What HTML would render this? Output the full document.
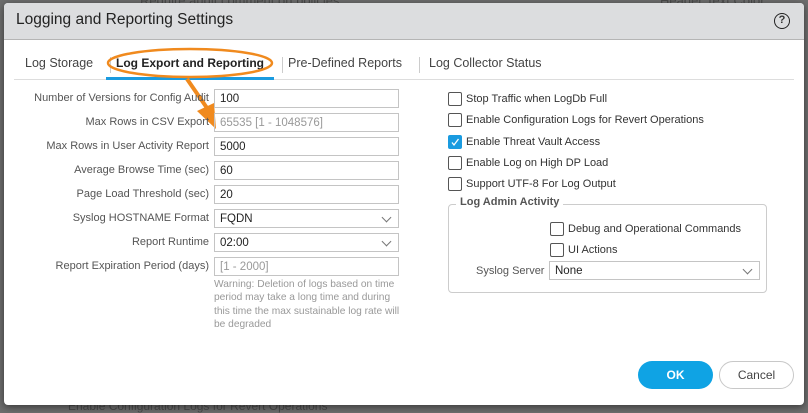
<!DOCTYPE html>
<html><head><style>
*{box-sizing:border-box}
body{margin:0;width:808px;height:412px;overflow:hidden;background:#6e6e6e;font-family:"Liberation Sans",sans-serif;font-size:12px;color:#333;position:relative}
.bgt{position:absolute;color:#333;font-size:13px;opacity:.6}
.dlg{position:absolute;left:4px;top:3px;width:800px;height:402px;background:#fff;border-radius:4px;box-shadow:0 2px 8px rgba(0,0,0,.5);overflow:hidden}
.hdr{height:37px;background:#dcdddf;border-bottom:1px solid #b5b5b5;position:relative}
.hdr .t{position:absolute;left:12px;top:8px;font-size:15.5px;color:#222}
.help{position:absolute;right:14px;top:10px;width:16px;height:16px;border:1.5px solid #222;border-radius:50%;font-size:11px;font-weight:bold;text-align:center;line-height:13px}
.tabs{position:absolute;left:10px;top:40px;right:10px;height:37px;border-bottom:1px solid #ddd}
.tab{position:absolute;top:13px;font-size:12.5px;color:#444}
.sep{position:absolute;top:14px;width:1px;height:16px;background:#ccc}
.lbl{position:absolute;right:595px;font-size:11px;color:#555;text-align:right;white-space:nowrap}
.inp{position:absolute;left:210px;width:185px;height:19px;border:1px solid #c4c4c4;font-size:11.5px;padding:0 5px;line-height:18px;color:#222}
.ph{color:#999}
.chev{position:absolute;right:8px;top:4px;width:7px;height:7px;border-right:1px solid #777;border-bottom:1px solid #777;transform:rotate(45deg)}
.cb{position:absolute;width:14px;height:14px;border:1px solid #555;border-radius:2px;background:#fff}
.cb.on{background:#1a9be0;border-color:#1a9be0}
.ct{position:absolute;font-size:11px;color:#333;white-space:nowrap}
.warn{position:absolute;left:210px;top:275px;width:190px;font-size:10.2px;color:#999;line-height:13.3px}
</style></head><body>
<div class="bgt" style="left:140px;top:-7px">Require audit comment on policies</div>
<div class="bgt" style="left:660px;top:-7px">Header Text Color</div>
<div class="bgt" style="left:68px;top:399px;font-size:12px">Enable Configuration Logs for Revert Operations</div>
<div class="dlg">
 <div class="hdr"><div class="t">Logging and Reporting Settings</div><div class="help">?</div></div>
 <div class="tabs">
  <div class="tab" style="left:11px">Log Storage</div>
  <div class="sep" style="left:96px"></div>
  <div class="tab" style="left:102px;font-weight:bold;color:#222;font-size:12px">Log Export and Reporting</div>
  <div style="position:absolute;left:92px;top:34px;width:168px;height:3px;background:#1a9be0"></div>
  <div class="sep" style="left:268px"></div>
  <div class="tab" style="left:274px">Pre-Defined Reports</div>
  <div class="sep" style="left:405px"></div>
  <div class="tab" style="left:415px">Log Collector Status</div>
 </div>
 <svg style="position:absolute;left:0;top:0" width="800" height="402">
  <ellipse cx="186" cy="60" rx="82" ry="14" fill="none" stroke="#f08a1e" stroke-width="2.5"/>
  <line x1="183" y1="76" x2="203" y2="105" stroke="#f08a1e" stroke-width="4"/>
  <polygon points="193,108 212,126 210,100" fill="#f08a1e"/>
 </svg>
 <div class="lbl" style="top:89px">Number of Versions for Config Audit</div>
 <div class="inp" style="top:86px">100</div>
 <div class="lbl" style="top:113px">Max Rows in CSV Export</div>
 <div class="inp ph" style="top:110px">65535 [1 - 1048576]</div>
 <div class="lbl" style="top:137px">Max Rows in User Activity Report</div>
 <div class="inp" style="top:134px">5000</div>
 <div class="lbl" style="top:161px">Average Browse Time (sec)</div>
 <div class="inp" style="top:158px">60</div>
 <div class="lbl" style="top:185px">Page Load Threshold (sec)</div>
 <div class="inp" style="top:182px">20</div>
 <div class="lbl" style="top:209px">Syslog HOSTNAME Format</div>
 <div class="inp" style="top:206px">FQDN<span class="chev"></span></div>
 <div class="lbl" style="top:233px">Report Runtime</div>
 <div class="inp" style="top:230px">02:00<span class="chev"></span></div>
 <div class="lbl" style="top:257px">Report Expiration Period (days)</div>
 <div class="inp ph" style="top:254px">[1 - 2000]</div>
 <div class="warn">Warning: Deletion of logs based on time period may take a long time and during this time the max sustainable log rate will be degraded</div>

 <div class="cb" style="left:444px;top:89px"></div><div class="ct" style="left:462px;top:90px">Stop Traffic when LogDb Full</div>
 <div class="cb" style="left:444px;top:110px"></div><div class="ct" style="left:462px;top:111px">Enable Configuration Logs for Revert Operations</div>
 <div class="cb on" style="left:444px;top:132px"><svg width="12" height="12" style="position:absolute;left:0;top:0"><path d="M3 6.5 L5 9 L9.5 3" fill="none" stroke="#fff" stroke-width="1.3"/></svg></div><div class="ct" style="left:462px;top:133px">Enable Threat Vault Access</div>
 <div class="cb" style="left:444px;top:153px"></div><div class="ct" style="left:462px;top:154px">Enable Log on High DP Load</div>
 <div class="cb" style="left:444px;top:174px"></div><div class="ct" style="left:462px;top:175px">Support UTF-8 For Log Output</div>
 <div style="position:absolute;left:444px;top:201px;width:319px;height:89px;border:1px solid #ccc;border-radius:4px"></div>
 <div style="position:absolute;left:452px;top:193px;background:#fff;padding:0 4px;font-weight:bold;font-size:11px;color:#555">Log Admin Activity</div>
 <div class="cb" style="left:546px;top:219px"></div><div class="ct" style="left:564px;top:220px">Debug and Operational Commands</div>
 <div class="cb" style="left:546px;top:240px"></div><div class="ct" style="left:564px;top:241px">UI Actions</div>
 <div class="ct" style="left:472px;top:262px;color:#555">Syslog Server</div>
 <div class="inp" style="left:545px;top:258px;width:211px">None<span class="chev"></span></div>

 <div style="position:absolute;left:634px;top:358px;width:75px;height:28px;border-radius:14px;background:#0fa3e4;color:#fff;font-weight:bold;font-size:12px;text-align:center;line-height:28px">OK</div>
 <div style="position:absolute;left:715px;top:358px;width:75px;height:28px;border-radius:14px;border:1px solid #c8c8c8;color:#444;font-size:12px;text-align:center;line-height:26px">Cancel</div>
</div>
</body></html>
